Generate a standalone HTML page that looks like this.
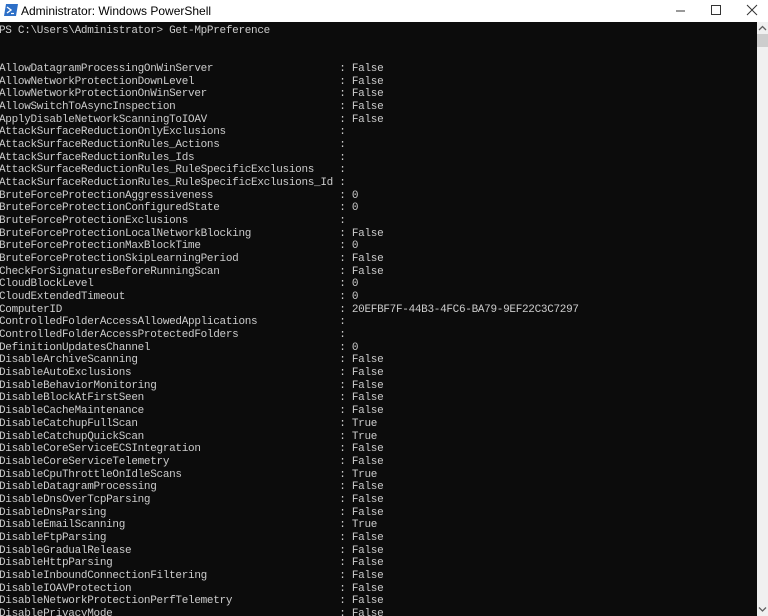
<!DOCTYPE html>
<html><head><meta charset="utf-8">
<style>
html,body{margin:0;padding:0;width:768px;height:616px;overflow:hidden;background:#fff;}
#title{position:absolute;left:0;top:0;width:768px;height:22px;background:#fff;font-family:"Liberation Sans",sans-serif;font-size:12px;color:#000;}
#title .t{position:absolute;left:21px;top:4px;}
#icon{position:absolute;left:4px;top:4px;width:14px;height:12px;}
#con{position:absolute;left:0;top:22px;width:757px;height:594px;background:#0c0c0c;overflow:hidden;}
pre{position:absolute;left:-1px;top:3px;margin:0;font-family:"Liberation Mono",monospace;font-size:11px;line-height:12.67px;color:#cccccc;letter-spacing:-0.3px;}
#sb{position:absolute;left:757px;top:22px;width:11px;height:594px;background:#f0f0f0;}
#thumb{position:absolute;left:757px;top:34px;width:11px;height:13px;background:#cdcdcd;}
</style></head><body>
<div id="title">
<svg id="icon" viewBox="0 0 14 12"><polygon points="2,0 14,0 12,12 0,12" fill="#2d6fc7"/><polyline points="3,3 7,6 3,9" fill="none" stroke="#fff" stroke-width="1.4"/><line x1="7" y1="9.5" x2="10" y2="9.5" stroke="#fff" stroke-width="1.2"/></svg>
<span class="t">Administrator: Windows PowerShell</span>
<svg style="position:absolute;left:675px;top:5px" width="12" height="12"><line x1="1" y1="6" x2="10" y2="6" stroke="#333" stroke-width="1"/></svg>
<svg style="position:absolute;left:710px;top:4px" width="12" height="12"><rect x="1.5" y="1.5" width="9" height="9" fill="none" stroke="#333" stroke-width="1"/></svg>
<svg style="position:absolute;left:746px;top:4px" width="12" height="12"><path d="M1 1L11 11M11 1L1 11" stroke="#333" stroke-width="1"/></svg>
</div>
<div id="con"><pre>PS C:\Users\Administrator&gt; Get-MpPreference


AllowDatagramProcessingOnWinServer                    : False
AllowNetworkProtectionDownLevel                       : False
AllowNetworkProtectionOnWinServer                     : False
AllowSwitchToAsyncInspection                          : False
ApplyDisableNetworkScanningToIOAV                     : False
AttackSurfaceReductionOnlyExclusions                  :
AttackSurfaceReductionRules_Actions                   :
AttackSurfaceReductionRules_Ids                       :
AttackSurfaceReductionRules_RuleSpecificExclusions    :
AttackSurfaceReductionRules_RuleSpecificExclusions_Id :
BruteForceProtectionAggressiveness                    : 0
BruteForceProtectionConfiguredState                   : 0
BruteForceProtectionExclusions                        :
BruteForceProtectionLocalNetworkBlocking              : False
BruteForceProtectionMaxBlockTime                      : 0
BruteForceProtectionSkipLearningPeriod                : False
CheckForSignaturesBeforeRunningScan                   : False
CloudBlockLevel                                       : 0
CloudExtendedTimeout                                  : 0
ComputerID                                            : 20EFBF7F-44B3-4FC6-BA79-9EF22C3C7297
ControlledFolderAccessAllowedApplications             :
ControlledFolderAccessProtectedFolders                :
DefinitionUpdatesChannel                              : 0
DisableArchiveScanning                                : False
DisableAutoExclusions                                 : False
DisableBehaviorMonitoring                             : False
DisableBlockAtFirstSeen                               : False
DisableCacheMaintenance                               : False
DisableCatchupFullScan                                : True
DisableCatchupQuickScan                               : True
DisableCoreServiceECSIntegration                      : False
DisableCoreServiceTelemetry                           : False
DisableCpuThrottleOnIdleScans                         : True
DisableDatagramProcessing                             : False
DisableDnsOverTcpParsing                              : False
DisableDnsParsing                                     : False
DisableEmailScanning                                  : True
DisableFtpParsing                                     : False
DisableGradualRelease                                 : False
DisableHttpParsing                                    : False
DisableInboundConnectionFiltering                     : False
DisableIOAVProtection                                 : False
DisableNetworkProtectionPerfTelemetry                 : False
DisablePrivacyMode                                    : False</pre></div>
<div id="sb"></div>
<div id="thumb"></div>
<svg style="position:absolute;left:758px;top:25px" width="9" height="7"><polyline points="1,5 4.5,1.5 8,5" fill="none" stroke="#606060" stroke-width="1.3"/></svg>
<svg style="position:absolute;left:758px;top:606px" width="9" height="7"><polyline points="1,1.5 4.5,5 8,1.5" fill="none" stroke="#606060" stroke-width="1.3"/></svg>
</body></html>
